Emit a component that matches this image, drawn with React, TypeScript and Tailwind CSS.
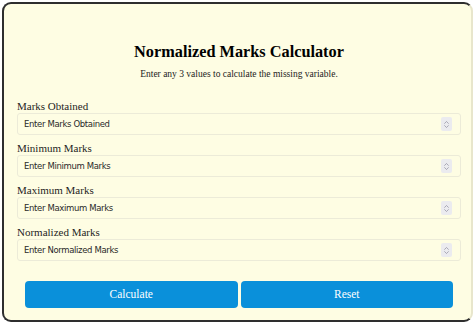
import { ChevronsUpDown } from 'lucide-react';

const fields = [
  { label: 'Marks Obtained', placeholder: 'Enter Marks Obtained' },
  { label: 'Minimum Marks', placeholder: 'Enter Minimum Marks' },
  { label: 'Maximum Marks', placeholder: 'Enter Maximum Marks' },
  { label: 'Normalized Marks', placeholder: 'Enter Normalized Marks' },
];

export default function App() {
  return (
    <div className="h-[324px] w-[474px] overflow-hidden bg-white p-[2px]">
      <div
        className="flex h-[320px] w-[471px] flex-col rounded-[9px] border-2 border-[#2e2e2e] border-r-[#e8e6cc] bg-[#fefde3] pl-[13px] pr-[10px] pt-[38px]"
        style={{ fontFamily: '"Liberation Serif", serif' }}
      >
        <h1 className="text-center text-[16.3px] font-bold leading-[20px] text-black">
          Normalized Marks Calculator
        </h1>
        <p className="mt-[6px] text-center text-[9.5px] leading-[12px] text-[#222]">
          Enter any 3 values to calculate the missing variable.
        </p>

        <div className="mt-[20px] flex flex-col">
          {fields.map((f) => (
            <div key={f.label} className="flex h-[42px] flex-col">
              <label className="text-[11px] leading-[13px] text-[#1e1e1e]">{f.label}</label>
              <div className="flex h-[22px] items-center justify-between rounded-[3px] border border-[#ecebd8] bg-[#fefde3] pl-[6px] pr-[8px]">
                <span
                  className="text-[8.5px] text-[#2a2a2a]"
                  style={{ fontFamily: '"DejaVu Sans", sans-serif', letterSpacing: '-0.35px' }}
                >
                  {f.placeholder}
                </span>
                <span className="flex h-[14px] w-[11px] items-center justify-center rounded-[2px] bg-[#ebebef]">
                  <ChevronsUpDown size={9} strokeWidth={1.5} color="#77758a" />
                </span>
              </div>
            </div>
          ))}
        </div>

        <div className="mt-[13px] flex gap-[3px] px-[8px]">
          <button className="h-[27px] flex-1 rounded-[4px] bg-[#0a90da] text-[11.5px] text-white">
            Calculate
          </button>
          <button className="h-[27px] flex-1 rounded-[4px] bg-[#0a90da] text-[11.5px] text-white">
            Reset
          </button>
        </div>
      </div>
    </div>
  );
}
